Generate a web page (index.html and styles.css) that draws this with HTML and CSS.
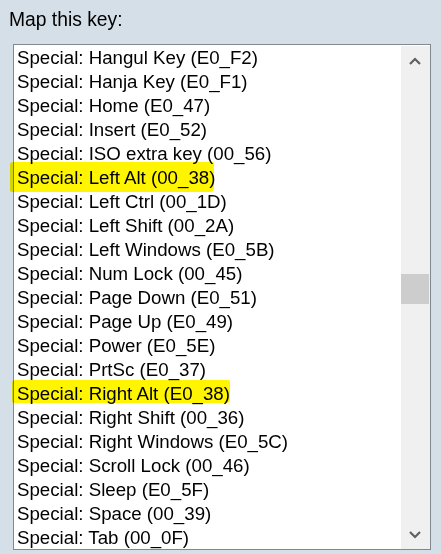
FILE: index.html
```html
<!DOCTYPE html>
<html>
<head>
<meta charset="utf-8">
<link rel="stylesheet" href="styles.css">
</head>
<body>
<div class="panel">
  <div class="label">Map this key:</div>
  <div class="listbox">
    <ul class="items">
      <li>Special: Hangul Key (E0_F2)</li>
      <li>Special: Hanja Key (E0_F1)</li>
      <li>Special: Home (E0_47)</li>
      <li>Special: Insert (E0_52)</li>
      <li>Special: ISO extra key (00_56)</li>
      <li class="marked"><span class="mark mark-a"></span>Special: Left Alt (00_38)</li>
      <li>Special: Left Ctrl (00_1D)</li>
      <li>Special: Left Shift (00_2A)</li>
      <li>Special: Left Windows (E0_5B)</li>
      <li>Special: Num Lock (00_45)</li>
      <li>Special: Page Down (E0_51)</li>
      <li>Special: Page Up (E0_49)</li>
      <li>Special: Power (E0_5E)</li>
      <li>Special: PrtSc (E0_37)</li>
      <li class="marked"><span class="mark mark-b"></span>Special: Right Alt (E0_38)</li>
      <li>Special: Right Shift (00_36)</li>
      <li>Special: Right Windows (E0_5C)</li>
      <li>Special: Scroll Lock (00_46)</li>
      <li>Special: Sleep (E0_5F)</li>
      <li>Special: Space (00_39)</li>
      <li>Special: Tab (00_0F)</li>
    </ul>
    <div class="scrollbar">
      <div class="arrow">
        <svg width="12" height="8" viewBox="0 0 12 8"><path d="M1 7 L6 2 L11 7" fill="none" stroke="#606060" stroke-width="2.2"/></svg>
      </div>
      <div class="track">
        <div class="thumb"></div>
      </div>
      <div class="arrow">
        <svg width="12" height="8" viewBox="0 0 12 8"><path d="M1 1 L6 6 L11 1" fill="none" stroke="#606060" stroke-width="2.2"/></svg>
      </div>
    </div>
  </div>
</div>
</body>
</html>
```

FILE: styles.css
```css
html, body {
  margin: 0;
  padding: 0;
  background: #d5dfe7;
}
body {
  width: 441px;
  height: 554px;
  overflow: hidden;
  font-family: "Liberation Sans", Arial, sans-serif;
  color: #000;
}
.panel {
  display: flex;
  flex-direction: column;
  padding: 7px 0 0 0;
}
.label {
  font-size: 19.3px;
  line-height: 26px;
  margin-left: 9px;
  height: 37px;
}
.listbox {
  position: relative;
  margin-left: 13px;
  width: 416px;
  height: 504px;
  border: 1px solid #828790;
  background: #fff;
  display: flex;
}
.items {
  list-style: none;
  margin: 0;
  padding: 1px 0 0 3px;
  flex: 1;
  font-size: 18.7px;
}
.items li {
  position: relative;
  height: 24px;
  line-height: 24px;
  white-space: nowrap;
}
.mark {
  position: absolute;
  background: #fff500;
  mix-blend-mode: multiply;
  border-radius: 3px 2px 4px 2px;
}
.mark-a {
  left: -7px;
  top: -4px;
  width: 204px;
  height: 30px;
}
.mark-b {
  left: -5px;
  top: -2px;
  width: 218px;
  height: 23px;
}
.scrollbar {
  width: 29px;
  margin-top: 1px;
  background: #f0f0f0;
  display: flex;
  flex-direction: column;
}
.arrow {
  height: 29px;
  display: flex;
  align-items: center;
  justify-content: center;
  padding-right: 1px;
}
.track {
  flex: 1;
  padding-top: 199px;
  padding-right: 1px;
}
.thumb {
  height: 30px;
  background: #cdcdcd;
}
```
